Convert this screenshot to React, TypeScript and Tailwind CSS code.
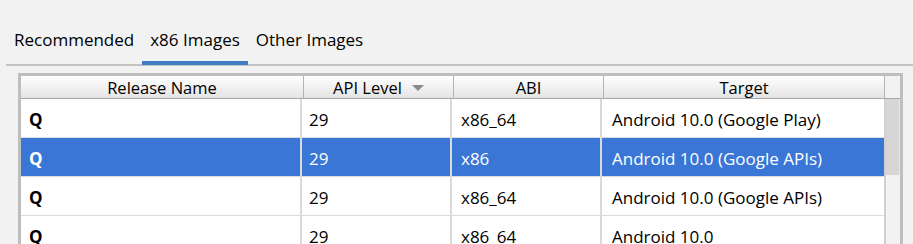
import { ReactNode } from 'react';

const rows = [
  { name: 'Q', api: '29', abi: 'x86_64', target: 'Android 10.0 (Google Play)', selected: false },
  { name: 'Q', api: '29', abi: 'x86', target: 'Android 10.0 (Google APIs)', selected: true },
  { name: 'Q', api: '29', abi: 'x86_64', target: 'Android 10.0 (Google APIs)', selected: false },
  { name: 'Q', api: '29', abi: 'x86_64', target: 'Android 10.0', selected: false }
];

const tabs = ['Recommended', 'x86 Images', 'Other Images'];

function HeaderCell({ children, first }: { children: ReactNode; first?: boolean }) {
  return (
    <div className={`h-full flex items-center justify-center pt-[2px] ${first ? '' : 'border-l border-[#b4b4b4]'}`}>
      {children}
    </div>
  );
}

export default function App() {
  return (
    <div
      className="w-[913px] h-[244px] bg-[#f2f2f2] overflow-hidden text-black"
      style={{ fontFamily: '"Open Sans", "Noto Sans", sans-serif' }}
    >
      {/* Tabs */}
      <div className="pt-[28px] pl-[6px]">
        <div className="flex">
          {tabs.map((tab) => (
            <div
              key={tab}
              className={`px-2 pb-[9px] text-[17px] leading-[24px] border-b-4 ${
                tab === 'x86 Images' ? 'border-[#3d7dc6]' : 'border-transparent'
              }`}
            >
              {tab}
            </div>
          ))}
        </div>
        <div className="h-[2px] bg-[#c4c4c4] -mt-px" />
      </div>

      {/* Table */}
      <div className="ml-[18px] mt-[7px] w-[885px] border-[3px] border-b-0 border-[#bebebe] bg-white">
        <div className="grid grid-cols-[282px_150px_150px_281px_16px] h-[23px] text-[16.5px] leading-[20px] border-b border-[#a6a6a6] bg-gradient-to-b from-white to-[#e4e4e4]">
          <HeaderCell first>Release Name</HeaderCell>
          <HeaderCell>
            <span>API Level</span>
            <svg width="12" height="7" viewBox="0 0 12 7" className="ml-[10px] mt-[1px]">
              <polygon points="0,0 12,0 6,6" fill="#8a8a8a" />
            </svg>
          </HeaderCell>
          <HeaderCell>ABI</HeaderCell>
          <HeaderCell>Target</HeaderCell>
          <div className="h-full border-l border-[#b4b4b4] bg-[#f2f2f2]" />
        </div>

        <div className="grid grid-cols-[863px_16px]">
          <div>
            {rows.map((row, i) => (
              <div
                key={i}
                className={`grid grid-cols-[281px_150px_150px_282px] h-[39px] border-b border-[#dcdcdc] text-[17px] leading-[24px] ${
                  row.selected ? 'bg-[#3a76d5] text-white' : ''
                }`}
              >
                <div className="flex items-center pt-[4px] pl-[8px] font-bold border-r-2 border-[#dadada]">{row.name}</div>
                <div className="flex items-center pt-[4px] pl-[7px] border-r-2 border-[#dadada]">{row.api}</div>
                <div className="flex items-center pt-[4px] pl-[9px] border-r-2 border-[#dadada]">{row.abi}</div>
                <div className="flex items-center pt-[4px] pl-[10px]">{row.target}</div>
              </div>
            ))}
          </div>
          <div className="bg-[#f2f2f2] border-l-2 border-[#d0d0d0]">
            <div className="h-[76px] bg-[#d6d6d6] border-r border-[#e6e6e6]" />
          </div>
        </div>
      </div>
    </div>
  );
}
